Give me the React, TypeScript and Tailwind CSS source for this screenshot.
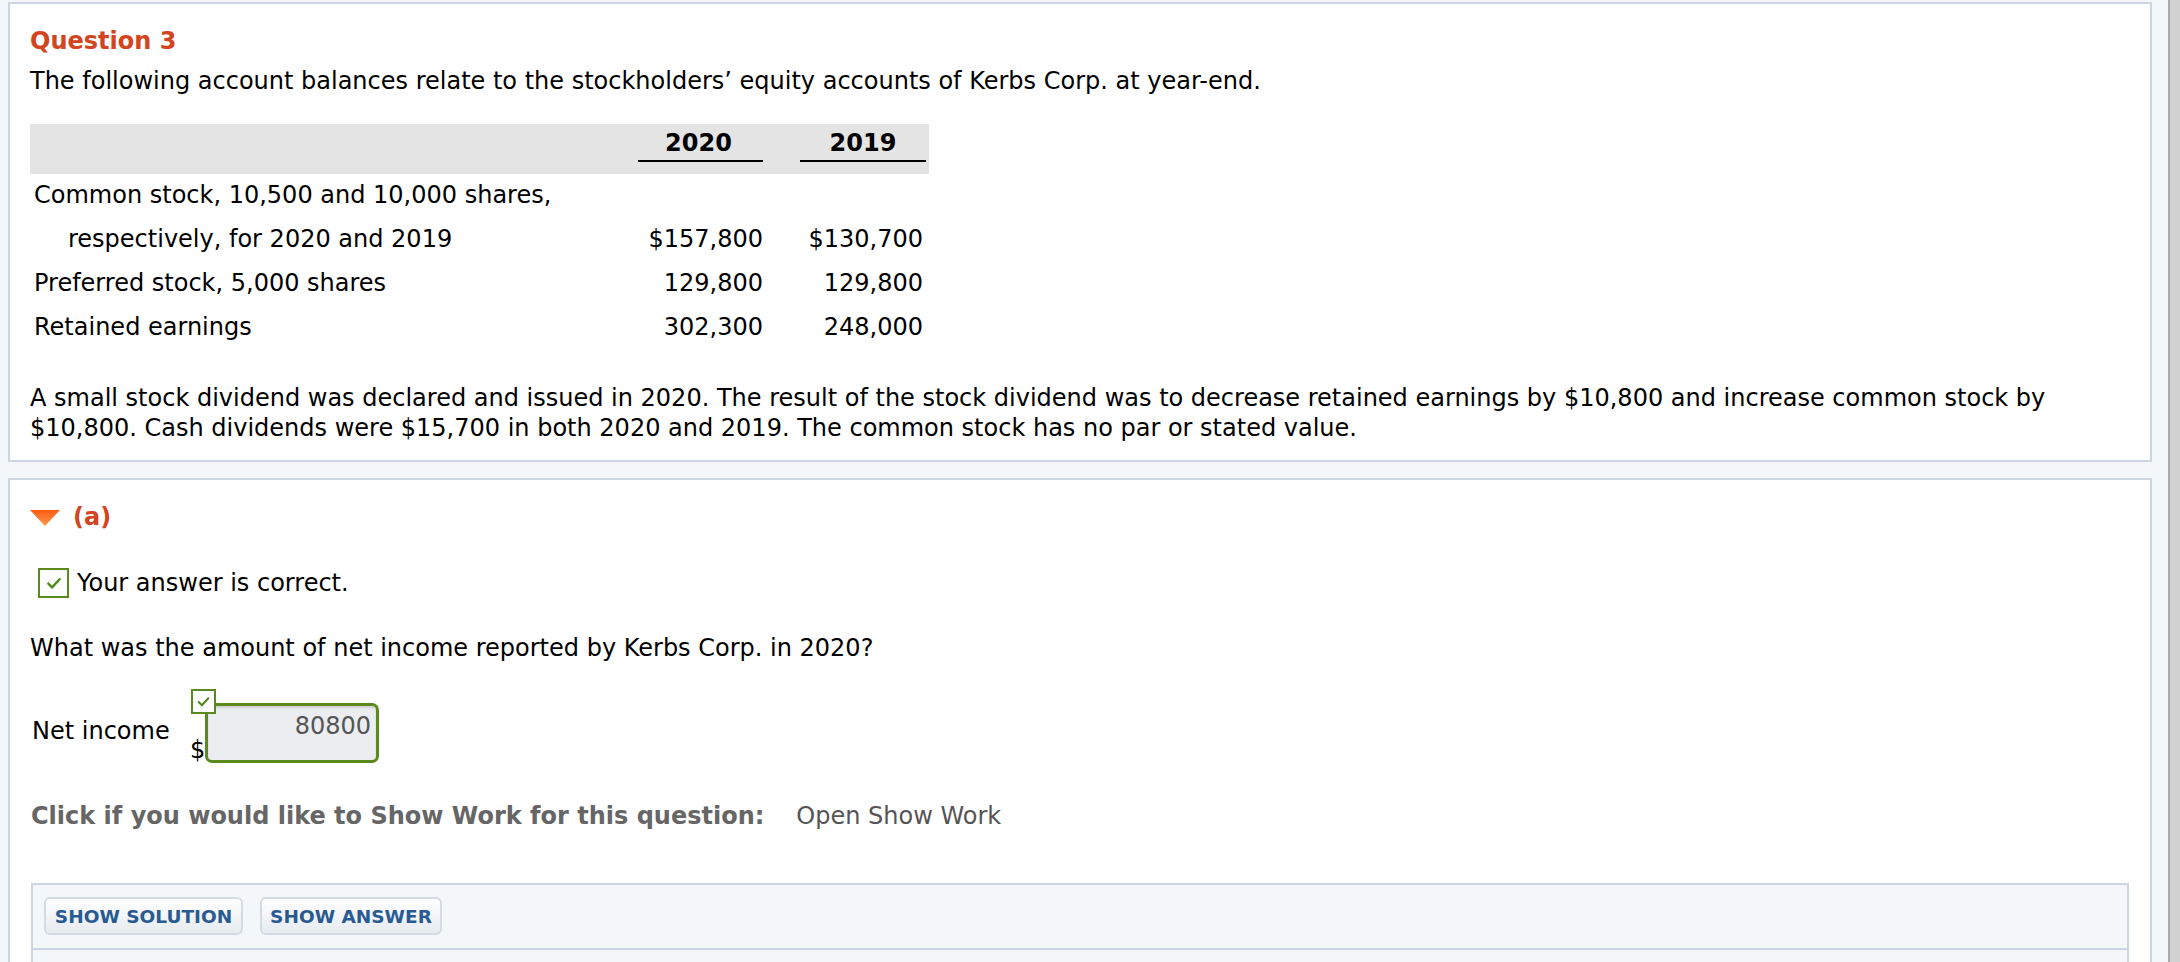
import React from "react";

function Check({ size }: { size: number }) {
  return (
    <svg width={size} height={size} viewBox="0 0 16 16" fill="none">
      <polyline points="3.5,8.5 6.5,11.5 12.5,5" stroke="#4f8a1b" strokeWidth="2" strokeLinecap="round" strokeLinejoin="round" />
    </svg>
  );
}

const rows = [
  { label: "Common stock, 10,500 and 10,000 shares,", a: "", b: "", indent: false },
  { label: "respectively, for 2020 and 2019", a: "$157,800", b: "$130,700", indent: true },
  { label: "Preferred stock, 5,000 shares", a: "129,800", b: "129,800", indent: false },
  { label: "Retained earnings", a: "302,300", b: "248,000", indent: false },
];

export default function App() {
  return (
    <div className="flex h-[962px] overflow-hidden bg-[#f4f7fa] font-['DejaVu_Sans',Verdana,sans-serif] text-[24px] leading-[29px] text-black">
      <div className="flex flex-col w-[2144px] ml-[8px] pt-[2px]">
        {/* Question panel */}
        <section className="bg-white border-2 border-[#cdd5e0] px-[20px] pt-[23px] pb-[17px]">
          <h2 className="font-bold text-[#d2451e]">Question 3</h2>
          <p className="mt-[11px]">
            The following account balances relate to the stockholders’ equity accounts of Kerbs Corp. at year-end.
          </p>

          <div className="mt-[28px] w-[899px]">
            <div className="grid grid-cols-[604px_133px_162px] h-[50px] bg-[#e4e4e4] font-bold">
              <div />
              <div className="px-[4px] pt-[5px]">
                <div className="text-center pr-[4px] border-b-2 border-black pb-[2px]">2020</div>
              </div>
              <div className="pl-[33px] pr-[3px] pt-[5px]">
                <div className="text-center border-b-2 border-black pb-[2px]">2019</div>
              </div>
            </div>
            {rows.map((r) => (
              <div key={r.label} className="grid grid-cols-[604px_133px_162px] h-[44px] pt-[7px]">
                <div className={r.indent ? "pl-[38px]" : "pl-[4px]"}>{r.label}</div>
                <div className="px-[4px] text-right">{r.a}</div>
                <div className="pl-[33px] pr-[6px] text-right">{r.b}</div>
              </div>
            ))}
          </div>

          <p className="mt-[33px] leading-[30px]">
            A small stock dividend was declared and issued in 2020. The result of the stock dividend was to decrease retained earnings by $10,800 and increase common stock by $10,800. Cash dividends were $15,700 in both 2020 and 2019. The common stock has no par or stated value.
          </p>
        </section>

        {/* Part (a) panel */}
        <section className="mt-[16px] flex-1 bg-white border-2 border-[#cdd5e0] px-[20px] pt-[23px]">
          <div className="flex items-center gap-[13px]">
            <svg width="30" height="16" viewBox="0 0 30 16">
              <defs>
                <linearGradient id="tri" x1="0" y1="0" x2="0" y2="1">
                  <stop offset="0" stopColor="#ff5a14" />
                  <stop offset="1" stopColor="#ff9a4a" />
                </linearGradient>
              </defs>
              <polygon points="0,0 30,0 15,16" fill="url(#tri)" />
            </svg>
            <span className="font-bold text-[#d2451e]">(a)</span>
          </div>

          <div className="mt-[36px] ml-[8px] flex items-center gap-[8px]">
            <span className="flex items-center justify-center w-[31px] h-[30px] border-2 border-[#5a8a1e] bg-white">
              <Check size={20} />
            </span>
            <span>Your answer is correct.</span>
          </div>

          <p className="mt-[36px]">What was the amount of net income reported by Kerbs Corp. in 2020?</p>

          <div className="flex mt-[40px] h-[60px]">
            <div className="w-[160px] pl-[2px] pt-[14px]">Net income</div>
            <div className="w-[15px] pt-[33px]">$</div>
            <div className="relative w-[174px] h-[60px] rounded-[7px] border-[3px] border-[#5a8a1e] bg-[#ecedf0] shadow-[inset_0_2px_2px_rgba(0,0,0,0.12)] text-right pr-[5px] pt-[6px] text-[#555]">
              80800
              <span className="absolute -top-[17px] -left-[17px] flex items-center justify-center w-[25px] h-[25px] border-2 border-[#5a8a1e] bg-white">
                <Check size={17} />
              </span>
            </div>
          </div>

          <div className="mt-[39px] flex items-center gap-[32px] pl-[1px]">
            <span className="font-bold text-[#666]">Click if you would like to Show Work for this question:</span>
            <span className="text-[#555]">Open Show Work</span>
          </div>

          <div className="mt-[52px] mx-[1px] border-2 border-[#cdd5e0] bg-[#f4f7fa]">
            <div className="flex gap-[17px] pl-[11px] pt-[12px] pb-[13px]">
              <button className="w-[199px] h-[38px] rounded-[6px] border-2 border-[#d3dae3] bg-gradient-to-b from-white to-[#e6ebf0] text-[18.5px] font-bold text-[#2a5a92]">
                SHOW SOLUTION
              </button>
              <button className="w-[182px] h-[38px] rounded-[6px] border-2 border-[#d3dae3] bg-gradient-to-b from-white to-[#e6ebf0] text-[18.5px] font-bold text-[#2a5a92]">
                SHOW ANSWER
              </button>
            </div>
            <div className="h-[60px] border-t-2 border-[#cdd5e0]" />
          </div>
        </section>
      </div>
      <div className="ml-[16px] w-[12px] border-l-2 border-[#a9a9a9] bg-[#d1d1d1]" />
    </div>
  );
}
